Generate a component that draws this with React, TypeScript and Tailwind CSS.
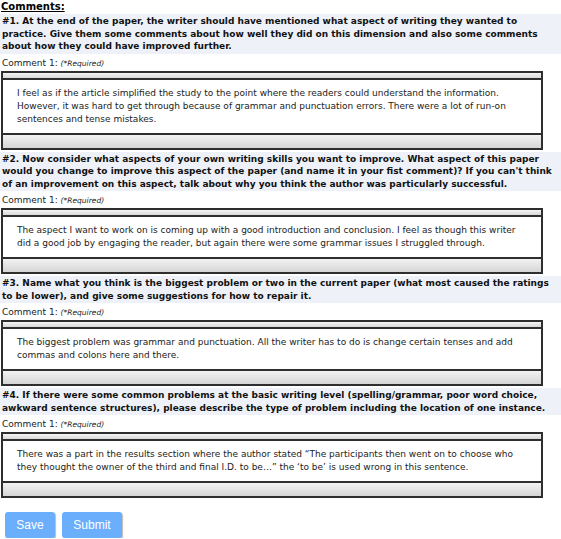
const questions = [
  {
    q: "#1. At the end of the paper, the writer should have mentioned what aspect of writing they wanted to practice. Give them some comments about how well they did on this dimension and also some comments about how they could have improved further.",
    a: "I feel as if the article simplified the study to the point where the readers could understand the information. However, it was hard to get through because of grammar and punctuation errors. There were a lot of run-on sentences and tense mistakes.",
  },
  {
    q: "#2. Now consider what aspects of your own writing skills you want to improve. What aspect of this paper would you change to improve this aspect of the paper (and name it in your fist comment)? If you can't think of an improvement on this aspect, talk about why you think the author was particularly successful.",
    a: "The aspect I want to work on is coming up with a good introduction and conclusion. I feel as though this writer did a good job by engaging the reader, but again there were some grammar issues I struggled through.",
  },
  {
    q: "#3. Name what you think is the biggest problem or two in the current paper (what most caused the ratings to be lower), and give some suggestions for how to repair it.",
    a: "The biggest problem was grammar and punctuation. All the writer has to do is change certain tenses and add commas and colons here and there.",
  },
  {
    q: "#4. If there were some common problems at the basic writing level (spelling/grammar, poor word choice, awkward sentence structures), please describe the type of problem including the location of one instance.",
    a: "There was a part in the results section where the author stated \u201cThe participants then went on to choose who they thought the owner of the third and final I.D. to be\u2026\u201d the \u2018to be\u2019 is used wrong in this sentence.",
  },
];

function Editor({ text }: { text: string }) {
  return (
    <div className="ml-[1px] w-[542px] border-2 border-[#2e2e2e]">
      <div className="h-[5px] bg-gradient-to-b from-[#f4f4f4] to-[#d9d9d9]" />
      <div className="border-y-2 border-[#2e2e2e] bg-white py-[7px] pl-[14px] pr-[24px] text-[9px] leading-[13px] text-[#222]">
        {text}
      </div>
      <div className="h-[13px] bg-gradient-to-b from-[#f2f2f2] to-[#d6d6d6]" />
    </div>
  );
}

export default function App() {
  return (
    <div className="w-[561px] bg-white text-black font-['Verdana','DejaVu_Sans',sans-serif]">
      <h2 className="pl-[1px] text-[10px] font-bold leading-[14px] underline">Comments:</h2>
      {questions.map((item, i) => (
        <div key={i} className="pb-[2px]">
          <div className="bg-[#eef2f8] px-[2px] py-[1px] text-[9px] font-bold leading-[12.5px] text-[#111]">
            {item.q}
          </div>
          <div className="mt-[4px] px-[2px] text-[9px] leading-[11px] text-[#222]">
            Comment 1: <span className="text-[7.5px] italic">(*Required)</span>
          </div>
          <div className="mt-[2px]">
            <Editor text={item.a} />
          </div>
        </div>
      ))}
      <div className="mt-[12px] flex gap-[7px] pl-[5px]">
        <button className="h-[26px] w-[50px] rounded-[3px] bg-[#6aaefc] text-[12px] text-white shadow-[1px_1px_1px_#bbb] font-['Liberation_Sans',sans-serif]">
          Save
        </button>
        <button className="h-[26px] w-[60px] rounded-[3px] bg-[#6aaefc] text-[12px] text-white shadow-[1px_1px_1px_#bbb] font-['Liberation_Sans',sans-serif]">
          Submit
        </button>
      </div>
    </div>
  );
}
